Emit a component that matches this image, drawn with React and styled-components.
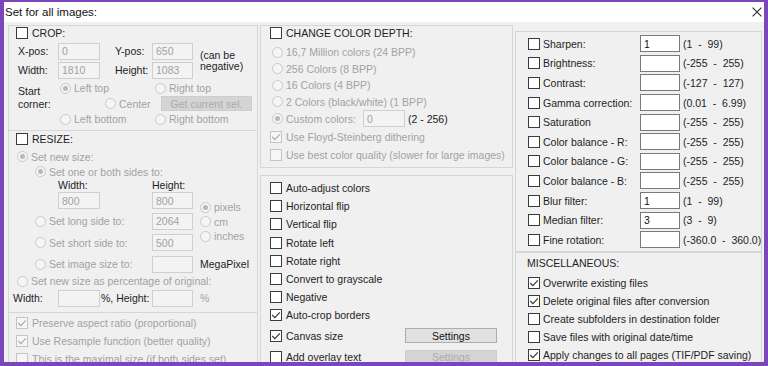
import React from 'react';
import styled, { createGlobalStyle } from 'styled-components';

const DIM = '#a2a2a2';
const INK = '#1e1e1e';

const GlobalStyle = createGlobalStyle`
  html, body { margin: 0; padding: 0; background: #ffffff; }
  body { font-family: "Liberation Sans", Arial, sans-serif; font-size: 10.5px; color: ${INK}; }
  *, *::before, *::after { box-sizing: border-box; }
`;

const Frame = styled.div`
  width: 768px;
  height: 366px;
  border-style: solid;
  border-color: #7b46bb;
  border-width: 2px 4px 4px 4px;
  background: #f0f0f0;
  display: flex;
  flex-direction: column;
  overflow: hidden;
`;

const TitleBar = styled.div`
  flex: none;
  height: 20px;
  background: #ffffff;
  display: flex;
  align-items: center;
  justify-content: space-between;
  padding: 0 2px 0 1px;
`;

const Title = styled.span`
  font-size: 11.5px;
  color: #111;
`;

const Body = styled.div`
  flex: 1;
  min-height: 0;
  overflow: hidden;
  display: grid;
  grid-template-columns: 250px 253px 247px;
  column-gap: 2px;
  padding: 3px 2px 0 4px;
`;

const Column = styled.div`
  display: flex;
  flex-direction: column;
  min-height: 0;
  padding-top: ${p => p.$top || 0}px;
`;

const Group = styled.div`
  border: 1px solid #d6d6d6;
  display: flex;
  flex-direction: column;
  min-height: 0;
  margin-top: ${p => p.$mt || 0}px;
  padding-top: ${p => p.$pt || 0}px;
  ${p => (p.$open ? 'border-bottom: none; flex: 1;' : `height: ${p.$h}px; flex: none;`)}
`;

const Row = styled.div`
  display: flex;
  align-items: center;
  flex: none;
  height: ${p => p.$h}px;
  margin-top: ${p => p.$mt || 0}px;
  padding-left: ${p => p.$indent || 0}px;
  padding-right: ${p => p.$pr || 0}px;
  gap: ${p => (p.$gap ?? 4)}px;
  color: ${p => (p.$dim ? DIM : INK)};
  white-space: nowrap;
`;

const BoxMark = styled.span`
  flex: none;
  width: 12px;
  height: 12px;
  border: 1px solid ${p => (p.$disabled ? '#c4c4c4' : '#3a3a3a')};
  background: ${p => (p.$disabled ? '#f6f6f6' : '#ffffff')};
  display: inline-flex;
  align-items: center;
  justify-content: center;
`;

function Checkbox({ checked, disabled }) {
  return (
    <BoxMark $disabled={disabled}>
      {checked && (
        <svg width="10" height="10" viewBox="0 0 10 10">
          <path d="M1.3 5 L3.9 7.6 L8.8 2.3" fill="none" stroke={disabled ? '#a9a9a9' : '#333'} strokeWidth="1.15" />
        </svg>
      )}
    </BoxMark>
  );
}

const Circle = styled.span`
  flex: none;
  width: 11px;
  height: 11px;
  border-radius: 50%;
  border: 1px solid #c9c9c9;
  background: #f5f5f5;
  display: inline-flex;
  align-items: center;
  justify-content: center;
  &::after {
    content: '';
    width: 5px;
    height: 5px;
    border-radius: 50%;
    background: #b8b8b8;
    display: ${p => (p.$on ? 'block' : 'none')};
  }
`;

const OptionWrap = styled.div`
  grid-area: ${p => p.$area || 'auto'};
  display: flex;
  align-items: center;
  gap: 3px;
  padding-left: ${p => p.$pl || 0}px;
  color: ${DIM};
  white-space: nowrap;
`;

function Option({ area, pl, on, children }) {
  return (
    <OptionWrap $area={area} $pl={pl}>
      <Circle $on={on} />
      <span>{children}</span>
    </OptionWrap>
  );
}

const Field = styled.input.attrs({ readOnly: true })`
  grid-area: ${p => p.$area || 'auto'};
  flex: none;
  width: ${p => p.$w}px;
  height: 17px;
  margin: 0;
  padding: 0 3px;
  font: inherit;
  font-size: 10.5px;
  outline: none;
  border: 1px solid ${p => (p.$off ? '#cfcfcf' : '#7a7a7a')};
  background: ${p => (p.$off ? '#f3f3f3' : '#ffffff')};
  color: ${p => (p.$off ? DIM : '#111')};
`;

const Cell = styled.div`
  grid-area: ${p => p.$area};
  display: flex;
  align-items: center;
  padding-left: ${p => p.$pl || 0}px;
  color: ${p => (p.$dim ? DIM : INK)};
  white-space: nowrap;
`;

const FieldLabel = styled.span`
  flex: none;
  width: ${p => p.$w}px;
`;

const Range = styled.span`
  white-space: pre;
  color: ${INK};
`;

const Button = styled.div`
  grid-area: ${p => p.$area || 'auto'};
  flex: none;
  width: ${p => p.$w}px;
  height: 15px;
  margin-left: ${p => (p.$ml === 'auto' ? 'auto' : `${p.$ml || 0}px`)};
  display: flex;
  align-items: center;
  justify-content: center;
  border: 1px solid ${p => (p.$off ? '#cdcdcd' : '#adadad')};
  background: ${p => (p.$off ? '#d4d4d4' : '#e1e1e1')};
  color: ${p => (p.$off ? '#ababab' : '#111')};
`;

const CoordGrid = styled.div`
  display: grid;
  grid-template-columns: 40px 42px 15px 37px 41px 1fr;
  grid-template-rows: 18px 18px;
  grid-template-areas:
    "xl xi . yl yi note"
    "wl wi . hl hi note";
  row-gap: 1px;
  align-items: center;
  margin-top: 2px;
  padding-left: 9px;
`;

const Note = styled.div`
  grid-area: note;
  padding-left: 7px;
  line-height: 11px;
  color: ${INK};
  white-space: nowrap;
`;

const CornerGrid = styled.div`
  display: grid;
  grid-template-columns: 42px 45px 50px 1fr;
  grid-template-rows: 16px 15px 16px;
  grid-template-areas:
    "lbl lt lt rt"
    "lbl .  ce btn"
    "lbl lb lb rb";
  align-items: center;
  margin-top: 1px;
  padding-left: 9px;
`;

const CornerLabel = styled.div`
  grid-area: lbl;
  align-self: start;
  margin-top: 5px;
  line-height: 13px;
  color: ${INK};
`;

const ResizeGrid = styled.div`
  display: grid;
  grid-template-columns: 26px 23px 42px 52px 41px 7px 1fr;
  grid-template-rows: 15px 15px 12px 19px 22px 21px 22px 12px 22px;
  grid-template-areas:
    "nw nw nw nw nw nw nw"
    ".  ob ob ob ob ob ob"
    ".  .  wl wl hl hl ."
    ".  .  wi .  hi .  un"
    ".  ls ls ls li .  un"
    ".  ss ss ss si .  un"
    ".  is is is ii .  mp"
    "pc pc pc pc pc pc pc"
    "pw pw pi ph pj .  pp";
  align-items: center;
  margin-top: 3px;
`;

const Units = styled.div`
  grid-area: un;
  align-self: start;
  padding-top: 9px;
  display: grid;
  grid-auto-rows: 14.5px;
  align-items: center;
`;

const Separator = styled.div`
  flex: none;
  height: 1px;
  margin-top: 3px;
  background: #d6d6d6;
`;

const CloseIcon = () => (
  <svg width="10" height="10" viewBox="0 0 10 10">
    <path d="M0.6 0.6 L9.4 9.4 M9.4 0.6 L0.6 9.4" stroke="#2a2a2a" strokeWidth="1.1" />
  </svg>
);

const filters = [
  ['Sharpen:', '1', '(1  -  99)'],
  ['Brightness:', '', '(-255  -  255)'],
  ['Contrast:', '', '(-127  -  127)'],
  ['Gamma correction:', '', '(0.01  -  6.99)'],
  ['Saturation', '', '(-255  -  255)'],
  ['Color balance - R:', '', '(-255  -  255)'],
  ['Color balance - G:', '', '(-255  -  255)'],
  ['Color balance - B:', '', '(-255  -  255)'],
  ['Blur filter:', '1', '(1  -  99)'],
  ['Median filter:', '3', '(3  -  9)'],
  ['Fine rotation:', '', '(-360.0  -  360.0)'],
];

const transforms = [
  ['Auto-adjust colors', false],
  ['Horizontal flip', false],
  ['Vertical flip', false],
  ['Rotate left', false],
  ['Rotate right', false],
  ['Convert to grayscale', false],
  ['Negative', false],
  ['Auto-crop borders', true],
];

const misc = [
  ['Overwrite existing files', true],
  ['Delete original files after conversion', true],
  ['Create subfolders in destination folder', false],
  ['Save files with original date/time', false],
  ['Apply changes to all pages (TIF/PDF saving)', true],
];

const depths = [
  '16,7 Million colors (24 BPP)',
  '256 Colors (8 BPP)',
  '16 Colors (4 BPP)',
  '2 Colors (black/white) (1 BPP)',
];

export default function App() {
  return (
    <>
      <GlobalStyle />
      <Frame>
        <TitleBar>
          <Title>Set for all images:</Title>
          <CloseIcon />
        </TitleBar>
        <Body>
          <Column>
            <Group $h={106}>
              <Row $h={14} $indent={7}>
                <Checkbox />
                <span>CROP:</span>
              </Row>
              <CoordGrid>
                <Cell $area="xl">X-pos:</Cell>
                <Field $area="xi" $w={42} $off value="0" />
                <Cell $area="yl">Y-pos:</Cell>
                <Field $area="yi" $w={41} $off value="650" />
                <Note>
                  (can be
                  <br />
                  negative)
                </Note>
                <Cell $area="wl">Width:</Cell>
                <Field $area="wi" $w={42} $off value="1810" />
                <Cell $area="hl">Height:</Cell>
                <Field $area="hi" $w={41} $off value="1083" />
              </CoordGrid>
              <CornerGrid>
                <CornerLabel>
                  Start
                  <br />
                  corner:
                </CornerLabel>
                <Option area="lt" on>Left top</Option>
                <Option area="rt">Right top</Option>
                <Option area="ce">Center</Option>
                <Button $area="btn" $w={91} $ml={6} $off>Get current sel.</Button>
                <Option area="lb">Left bottom</Option>
                <Option area="rb">Right bottom</Option>
              </CornerGrid>
            </Group>
            <Group $open $mt={-1}>
              <Row $h={14} $mt={1} $indent={7}>
                <Checkbox />
                <span>RESIZE:</span>
              </Row>
              <ResizeGrid>
                <Option area="nw" pl={8} on>Set new size:</Option>
                <Option area="ob" on>Set one or both sides to:</Option>
                <Cell $area="wl">Width:</Cell>
                <Cell $area="hl">Height:</Cell>
                <Field $area="wi" $w={42} $off value="800" />
                <Field $area="hi" $w={41} $off value="800" />
                <Option area="ls">Set long side to:</Option>
                <Field $area="li" $w={41} $off value="2064" />
                <Option area="ss">Set short side to:</Option>
                <Field $area="si" $w={41} $off value="500" />
                <Units>
                  <Option on>pixels</Option>
                  <Option>cm</Option>
                  <Option>inches</Option>
                </Units>
                <Option area="is">Set image size to:</Option>
                <Field $area="ii" $w={41} $off value="" />
                <Cell $area="mp">MegaPixel</Cell>
                <Option area="pc" pl={8}>Set new size as percentage of original:</Option>
                <Cell $area="pw" $pl={4}>Width:</Cell>
                <Field $area="pi" $w={42} $off value="" />
                <Cell $area="ph" $pl={1}>%, Height:</Cell>
                <Field $area="pj" $w={41} $off value="" />
                <Cell $area="pp" $dim>%</Cell>
              </ResizeGrid>
              <Separator />
              <Row $h={18} $mt={1} $indent={7} $dim>
                <Checkbox checked disabled />
                <span>Preserve aspect ratio (proportional)</span>
              </Row>
              <Row $h={18} $indent={7} $dim>
                <Checkbox checked disabled />
                <span>Use Resample function (better quality)</span>
              </Row>
              <Row $h={18} $indent={7} $dim>
                <Checkbox disabled />
                <span>This is the maximal size (if both sides set)</span>
              </Row>
            </Group>
          </Column>

          <Column>
            <Group $h={143}>
              <Row $h={14} $indent={9}>
                <Checkbox />
                <span>CHANGE COLOR DEPTH:</span>
              </Row>
              {depths.map((d, i) => (
                <Row key={d} $h={16.5} $mt={i === 0 ? 4 : 0} $indent={11} $gap={3} $dim>
                  <Circle />
                  <span>{d}</span>
                </Row>
              ))}
              <Row $h={17} $indent={11} $gap={3} $dim>
                <Circle $on />
                <FieldLabel $w={74}>Custom colors:</FieldLabel>
                <Field $w={42} $off value="0" />
                <Range>(2 - 256)</Range>
              </Row>
              <Row $h={18} $mt={1} $indent={9} $dim>
                <Checkbox checked disabled />
                <span>Use Floyd-Steinberg dithering</span>
              </Row>
              <Row $h={18} $indent={9} $dim>
                <Checkbox disabled />
                <span>Use best color quality (slower for large images)</span>
              </Row>
            </Group>
            <Group $open $mt={7} $pt={3}>
              {transforms.map(([t, c]) => (
                <Row key={t} $h={18.2} $indent={9}>
                  <Checkbox checked={c} />
                  <span>{t}</span>
                </Row>
              ))}
              <Row $h={20} $mt={1} $indent={9} $pr={15}>
                <Checkbox checked />
                <span>Canvas size</span>
                <Button $w={92} $ml="auto">Settings</Button>
              </Row>
              <Row $h={19} $mt={2} $indent={9} $pr={15}>
                <Checkbox />
                <span>Add overlay text</span>
                <Button $w={92} $ml="auto" $off>Settings</Button>
              </Row>
            </Group>
          </Column>

          <Column $top={6}>
            <Group $h={221} $pt={2}>
              {filters.map(([label, value, range]) => (
                <Row key={label} $h={19.6} $indent={12} $gap={3}>
                  <Checkbox />
                  <FieldLabel $w={94}>{label}</FieldLabel>
                  <Field $w={40} value={value} />
                  <Range>{range}</Range>
                </Row>
              ))}
            </Group>
            <Group $open>
              <Row $h={14} $mt={3} $indent={11}>
                <span>MISCELLANEOUS:</span>
              </Row>
              {misc.map(([t, c], i) => (
                <Row key={t} $h={18} $mt={i === 0 ? 4 : 0} $indent={12} $gap={3}>
                  <Checkbox checked={c} />
                  <span>{t}</span>
                </Row>
              ))}
            </Group>
          </Column>
        </Body>
      </Frame>
    </>
  );
}
